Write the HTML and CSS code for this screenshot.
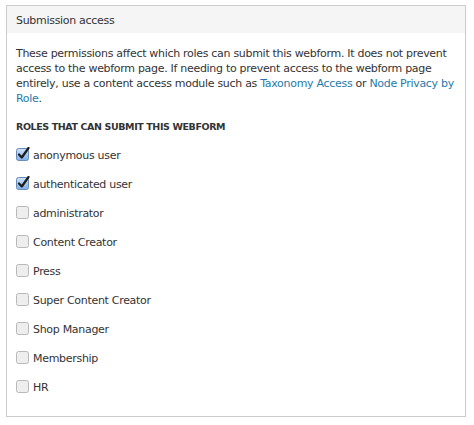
FILE: index.html
```html
<!DOCTYPE html>
<html>
<head>
<meta charset="utf-8">
<link rel="stylesheet" href="styles.css">
</head>
<body>
<div class="fieldset">
  <div class="legend">Submission access</div>
  <div class="content">
    <p class="desc">These permissions affect which roles can submit this webform. It does not prevent access to the webform page. If needing to prevent access to the webform page entirely, use a content access module such as <a href="#">Taxonomy Access</a> or <a href="#">Node Privacy by Role</a>.</p>
    <div class="label">ROLES THAT CAN SUBMIT THIS WEBFORM</div>
    <ul class="roles">
      <li class="role"><span class="box"><svg width="14" height="14" viewBox="0 0 14 14"><defs><linearGradient id="g1" x1="0" y1="0" x2="0" y2="1"><stop offset="0" stop-color="#cfe2f7"/><stop offset="1" stop-color="#7fb0e6"/></linearGradient></defs><rect x="0.5" y="1.5" width="12" height="12" rx="2" fill="url(#g1)" stroke="#6a8db8"/><path d="M3 7.5 L5.8 10.5 L12.5 1" fill="none" stroke="#1c1c1c" stroke-width="2.2" stroke-linecap="round" stroke-linejoin="round"/></svg></span>anonymous user</li>
      <li class="role"><span class="box"><svg width="14" height="14" viewBox="0 0 14 14"><rect x="0.5" y="1.5" width="12" height="12" rx="2" fill="url(#g1)" stroke="#6a8db8"/><path d="M3 7.5 L5.8 10.5 L12.5 1" fill="none" stroke="#1c1c1c" stroke-width="2.2" stroke-linecap="round" stroke-linejoin="round"/></svg></span>authenticated user</li>
      <li class="role"><span class="box"><svg width="14" height="14" viewBox="0 0 14 14"><rect x="0.5" y="1.5" width="12" height="12" rx="2" fill="#eeeeee" stroke="#b8b8b8"/></svg></span>administrator</li>
      <li class="role"><span class="box"><svg width="14" height="14" viewBox="0 0 14 14"><rect x="0.5" y="1.5" width="12" height="12" rx="2" fill="#eeeeee" stroke="#b8b8b8"/></svg></span>Content Creator</li>
      <li class="role"><span class="box"><svg width="14" height="14" viewBox="0 0 14 14"><rect x="0.5" y="1.5" width="12" height="12" rx="2" fill="#eeeeee" stroke="#b8b8b8"/></svg></span>Press</li>
      <li class="role"><span class="box"><svg width="14" height="14" viewBox="0 0 14 14"><rect x="0.5" y="1.5" width="12" height="12" rx="2" fill="#eeeeee" stroke="#b8b8b8"/></svg></span>Super Content Creator</li>
      <li class="role"><span class="box"><svg width="14" height="14" viewBox="0 0 14 14"><rect x="0.5" y="1.5" width="12" height="12" rx="2" fill="#eeeeee" stroke="#b8b8b8"/></svg></span>Shop Manager</li>
      <li class="role"><span class="box"><svg width="14" height="14" viewBox="0 0 14 14"><rect x="0.5" y="1.5" width="12" height="12" rx="2" fill="#eeeeee" stroke="#b8b8b8"/></svg></span>Membership</li>
      <li class="role"><span class="box"><svg width="14" height="14" viewBox="0 0 14 14"><rect x="0.5" y="1.5" width="12" height="12" rx="2" fill="#eeeeee" stroke="#b8b8b8"/></svg></span>HR</li>
    </ul>
  </div>
</div>
</body>
</html>
```

FILE: styles.css
```css
html, body {
  margin: 0;
  padding: 0;
  background: #ffffff;
}
body {
  padding: 5px 0 0 6px;
  font-family: "DejaVu Sans", Verdana, sans-serif;
  font-size: 11px;
  letter-spacing: -0.3px;
  color: #333333;
}
.fieldset {
  width: 458px;
  height: 410px;
  border: 1px solid #cccccc;
  box-sizing: content-box;
}
.legend {
  background: #f5f5f5;
  height: 27px;
  line-height: 29px;
  padding-left: 9px;
  font-size: 11px;
  color: #333333;
}
.content {
  padding: 13px 9px 0 9px;
}
.desc {
  margin: 0;
  line-height: 15px;
}
.desc a {
  color: #1f7aaa;
  text-decoration: none;
}
.label {
  margin-top: 14px;
  font-weight: bold;
  font-size: 9.5px;
  letter-spacing: -0.4px;
  line-height: 14px;
}
.roles {
  list-style: none;
  margin: 13px 0 0 0;
  padding: 0;
  display: flex;
  flex-direction: column;
  gap: 13px;
}
.role {
  display: flex;
  align-items: center;
  height: 16px;
  gap: 3px;
}
.box {
  display: flex;
  width: 14px;
  height: 14px;
  margin-top: -2px;
}
```
